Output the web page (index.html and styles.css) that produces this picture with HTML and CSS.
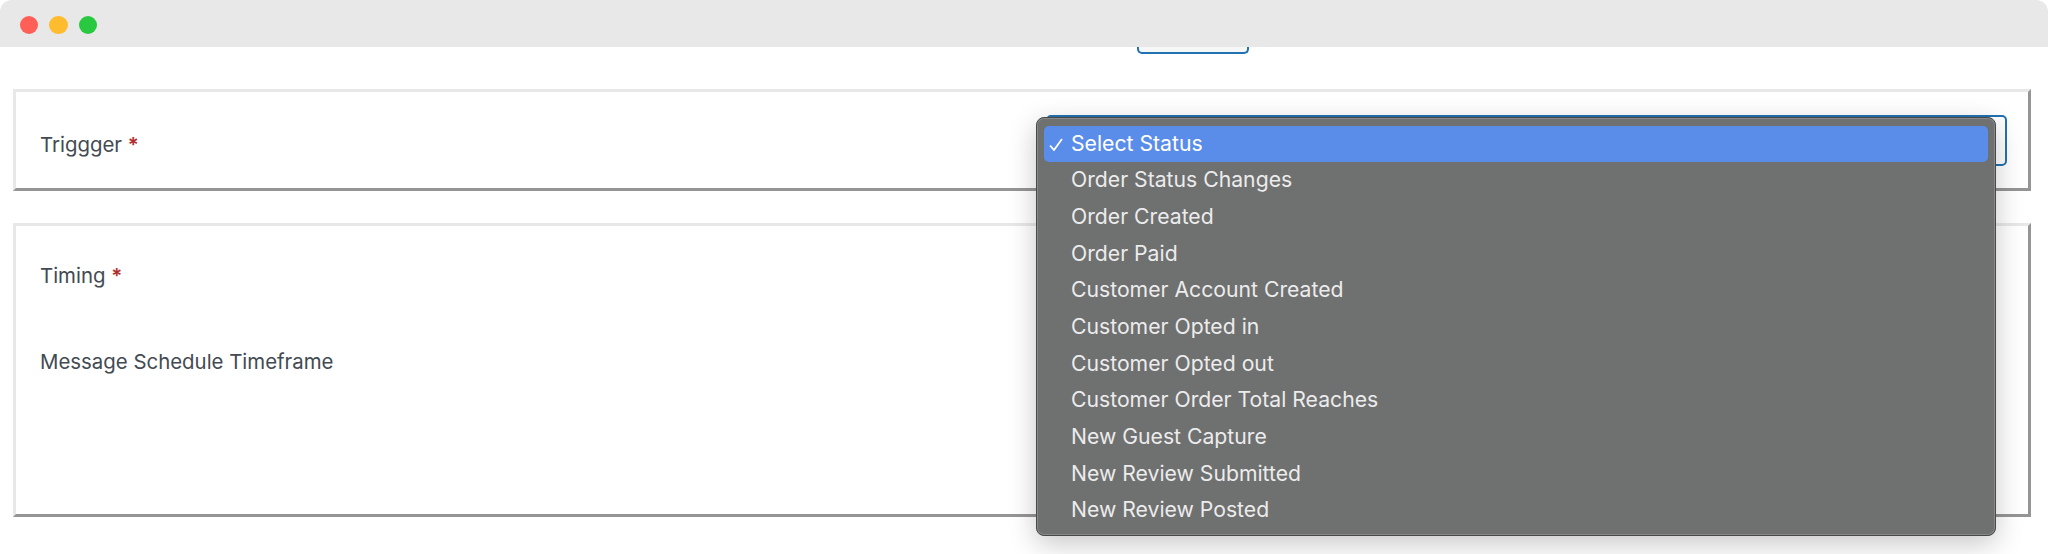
FILE: index.html
```html
<!DOCTYPE html>
<html lang="en">
<head>
  <meta charset="UTF-8" />
  <meta name="viewport" content="width=device-width, initial-scale=1.0" />
  <title>Automation settings</title>
  <link rel="stylesheet" href="styles.css">
</head>
<body>
  <div class="window">
    <div class="titlebar">
      <span class="light light-red"></span>
      <span class="light light-yellow"></span>
      <span class="light light-green"></span>
    </div>
    <div class="content">
      <div class="top-actions"><div class="cut-button"></div></div>

      <div class="card card-trigger">
        <label class="field-label trigger-label">Triggger <span class="required">*</span></label>
        <div class="select-box">
          <div class="select-menu">
            <div class="select-option is-selected">
              <svg class="check" viewBox="0 0 14 13" width="14" height="13"><path d="M1 7.5 L5 12 L13 1" /></svg>
              Select Status
            </div>
            <div class="select-option">Order Status Changes</div>
            <div class="select-option">Order Created</div>
            <div class="select-option">Order Paid</div>
            <div class="select-option">Customer Account Created</div>
            <div class="select-option">Customer Opted in</div>
            <div class="select-option">Customer Opted out</div>
            <div class="select-option">Customer Order Total Reaches</div>
            <div class="select-option">New Guest Capture</div>
            <div class="select-option">New Review Submitted</div>
            <div class="select-option">New Review Posted</div>
          </div>
        </div>
      </div>

      <div class="card card-timing">
        <label class="field-label">Timing <span class="required">*</span></label>
        <label class="field-label">Message Schedule Timeframe</label>
      </div>
    </div>
  </div>
</body>
</html>
```

FILE: styles.css
```css
html, body {
  margin: 0;
  background: #fff;
}
body {
  font-family: "Inter", "Liberation Sans", sans-serif;
  color: #434a52;
}
.window {
  height: 554px;
  border-radius: 12px;
  overflow: hidden;
  background: #fff;
}
.titlebar {
  display: flex;
  align-items: center;
  gap: 11px;
  height: 47px;
  padding: 3px 0 0 19.5px;
  box-sizing: border-box;
  background: #e8e8e8;
}
.light {
  width: 18.5px;
  height: 18.5px;
  border-radius: 50%;
}
.light-red { background: #ff5f57; }
.light-yellow { background: #febc2e; }
.light-green { background: #28c840; }
.content {
  padding: 0 17px 0 13px;
}
.top-actions {
  padding-left: 1124px;
  margin-bottom: 35px;
}
.cut-button {
  width: 112px;
  height: 7px;
  box-sizing: border-box;
  background: #f6f7f7;
  border: 2px solid #2271b1;
  border-top: none;
  border-radius: 0 0 5px 5px;
}
.card {
  box-sizing: border-box;
  border-style: solid;
  border-width: 3px;
  border-color: #e8e8e8 #959595 #959595 #e8e8e8;
  background: #fff;
}
.card-trigger {
  display: flex;
  align-items: center;
  justify-content: space-between;
  height: 102px;
  padding: 0 21px 0 24px;
  margin-bottom: 32px;
}
.card-timing {
  display: flex;
  flex-direction: column;
  gap: 58px;
  height: 294px;
  padding: 36px 0 0 24px;
}
.field-label {
  font-size: 20.4px;
  line-height: 28px;
}
.trigger-label {
  margin-top: 10px;
}
.required {
  color: #b32d2e;
  font-weight: 600;
}
.select-box {
  position: relative;
  width: 961px;
  height: 51px;
  box-sizing: border-box;
  border: 2px solid #2271b1;
  border-radius: 5px;
  background: #fff;
}
.select-menu {
  position: absolute;
  left: -12px;
  top: 0;
  z-index: 5;
  width: 960px;
  height: 419px;
  box-sizing: border-box;
  padding: 8px 7px;
  border: 1px solid #47484a;
  border-radius: 8px;
  background: #6f7070;
  box-shadow: inset 0 0 0 1px rgba(255, 255, 255, 0.18), 0 8px 28px rgba(0, 0, 0, 0.22);
}
.select-option {
  display: flex;
  align-items: center;
  height: 36.67px;
  box-sizing: border-box;
  padding: 0 0 2px 27px;
  border-radius: 5px;
  font-size: 21.2px;
  color: #ececec;
}
.select-option.is-selected {
  position: relative;
  height: 36px;
  margin-bottom: 0.67px;
  background: #5a8de9;
  color: #fff;
}
.check {
  position: absolute;
  left: 5px;
  top: 12px;
  fill: none;
  stroke: #fff;
  stroke-width: 1.8;
}
```
